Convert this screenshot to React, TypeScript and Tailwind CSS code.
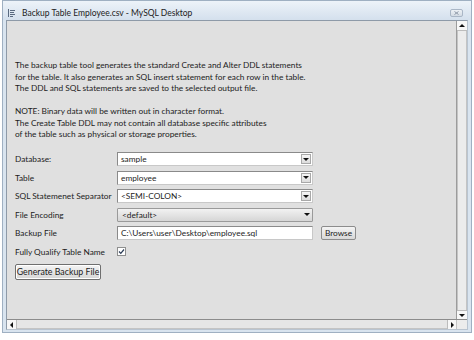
import React from 'react';

const rows = [
  { label: 'Database:', value: 'sample' },
  { label: 'Table', value: 'employee' },
  { label: 'SQL Statemenet Separator', value: '<SEMI-COLON>' },
  { label: 'File Encoding', value: '<default>', gray: true },
];

function Arrow({ dir }: { dir: 'up' | 'down' | 'left' | 'right' }) {
  const pts = {
    up: '0,4 3,1 6,4',
    down: '0,1 6,1 3,4',
    left: '4,0 4,6 1,3',
    right: '1,0 1,6 4,3',
  }[dir];
  const horiz = dir === 'left' || dir === 'right';
  return (
    <svg width={horiz ? 5 : 6} height={horiz ? 6 : 5} viewBox={horiz ? '0 0 5 6' : '0 0 6 5'}>
      <polygon points={pts} fill="#111" />
    </svg>
  );
}

function Combo({ value, gray }: { value: string; gray?: boolean }) {
  if (gray) {
    return (
      <div className="flex h-[14px] w-[196px] items-center rounded-[1px] border border-[#9a9a9a] bg-linear-to-b from-[#f2f2f2] to-[#d6d6d6]">
        <span className="flex-1 pl-[4px] leading-[12px]">{value}</span>
        <div className="flex w-[11px] items-center justify-center">
          <Arrow dir="down" />
        </div>
      </div>
    );
  }
  return (
    <div className="flex h-[14px] w-[196px] items-stretch border border-t-[#8a8a8a] border-l-[#8a8a8a] border-r-[#c8c8c8] border-b-[#c8c8c8] bg-white">
      <span className="flex-1 pl-[3px] leading-[12px]">{value}</span>
      <div className="m-[1px] flex w-[10px] items-center justify-center border border-[#a8a8a8] bg-linear-to-b from-[#f6f6f6] to-[#dcdcdc]">
        <Arrow dir="down" />
      </div>
    </div>
  );
}

function Label({ children }: { children: React.ReactNode }) {
  return <div className="w-[102px] whitespace-nowrap leading-[14px]">{children}</div>;
}

export default function App() {
  return (
    <div className="h-[340px] w-[474px] overflow-hidden bg-white font-['Lato',sans-serif] text-[8.3px] text-[#1c1c1c]">
      <div className="ml-[2px] flex h-[333px] w-[470px] flex-col border border-[#9fb0c2] bg-[#d9e4ef]">
        {/* title bar */}
        <div className="flex h-[19px] items-center bg-linear-to-b from-[#edf3f9] to-[#d4e0ed] pl-[5px] pr-[8px] pt-[4px]">
          <svg width="7" height="8" viewBox="0 0 7 8" className="mr-[7px]">
            <rect x="0" y="0" width="1" height="8" fill="#5a6a80" />
            <rect x="2" y="1" width="5" height="1" fill="#5a6a80" />
            <rect x="2" y="3" width="4" height="1" fill="#5a6a80" />
            <rect x="2" y="5" width="5" height="1" fill="#5a6a80" />
            <rect x="2" y="7" width="3" height="1" fill="#5a6a80" />
          </svg>
          <span className="flex-1 whitespace-nowrap text-[8.5px] leading-[12px] text-[#222]">Backup Table Employee.csv - MySQL Desktop</span>
          <div className="flex h-[8px] w-[13px] items-center justify-center rounded-[2px] border border-[#a9b6c6] bg-linear-to-b from-[#eef2f6] to-[#d3dbe4]">
            <svg width="5" height="4" viewBox="0 0 5 4">
              <path d="M0.5 0.5 L4.5 3.5 M4.5 0.5 L0.5 3.5" stroke="#8d99a8" strokeWidth="1" />
            </svg>
          </div>
        </div>

        {/* client area */}
        <div className="mx-[3px] mb-[2px] flex flex-1 flex-col border border-[#8e9aa8] border-b-[#b9c4d0] border-r-[#b9c4d0]">
          <div className="flex flex-1">
            <div className="flex w-[449px] flex-col bg-[#e0e0e0] pl-[8px]">
              <p className="mt-[39px] leading-[11.5px]">
                The backup table tool generates the standard Create and Alter DDL statements
                <br />
                for the table. It also generates an SQL insert statement for each row in the table.
                <br />
                The DDL and SQL statements are saved to the selected output file.
                <br />
                <br />
                NOTE: Binary data will be written out in character format.
                <br />
                The Create Table DDL may not contain all database specific attributes
                <br />
                of the table such as physical or storage properties.
              </p>

              <div className="mt-[11.5px] flex flex-col gap-[4.5px]">
                {rows.map((r) => (
                  <div key={r.label} className="flex h-[14px] items-center">
                    <Label>{r.label}</Label>
                    <Combo value={r.value} gray={r.gray} />
                  </div>
                ))}
                <div className="flex h-[14px] items-center">
                  <Label>Backup File</Label>
                  <div className="h-[14px] w-[196px] border border-t-[#8a8a8a] border-l-[#8a8a8a] border-r-[#c8c8c8] border-b-[#c8c8c8] bg-white pl-[3px] leading-[12px]">
                    C:\Users\user\Desktop\employee.sql
                  </div>
                  <div className="ml-[8px] flex h-[14px] w-[35px] items-center justify-center rounded-[2px] border border-[#8c8c8c] bg-linear-to-b from-[#f4f4f4] to-[#d8d8d8] leading-[12px]">
                    Browse
                  </div>
                </div>
                <div className="flex h-[14px] items-center">
                  <Label>Fully Qualify Table Name</Label>
                  <div className="flex h-[9px] w-[9px] items-center justify-center border border-[#8e8f8f] bg-white">
                    <svg width="7" height="7" viewBox="0 0 7 7">
                      <path d="M1 3.5 L2.8 5.3 L6 1.5" fill="none" stroke="#2a3b55" strokeWidth="1.2" />
                    </svg>
                  </div>
                </div>
              </div>

              <div className="mt-[5.5px] flex h-[16px] w-[86px] items-center justify-center whitespace-nowrap rounded-[2px] border border-[#6f6f6f] bg-linear-to-b from-[#f4f4f4] to-[#d6d6d6] text-[8.8px] leading-[12px] shadow-[inset_0_0_0_1px_#ffffff]">
                Generate Backup File
              </div>
            </div>

            {/* vertical scrollbar */}
            <div className="flex w-[11px] flex-col border-l border-[#9c9c9c] bg-[#e9e9e9]">
              <div className="flex h-[10px] items-center justify-center border-b border-[#bcbcbc] bg-[#f7f7f7]">
                <Arrow dir="up" />
              </div>
              <div className="flex-1 border-x border-[#c4c4c4] bg-[#ececec]" />
              <div className="flex h-[9px] items-center justify-center border-t border-[#bcbcbc] bg-[#f7f7f7]">
                <Arrow dir="down" />
              </div>
            </div>
          </div>

          {/* horizontal scrollbar */}
          <div className="flex h-[10px] border-t border-[#8c8c8c]">
            <div className="flex w-[10px] items-center justify-center border-r border-[#bcbcbc] bg-[#f7f7f7]">
              <Arrow dir="left" />
            </div>
            <div className="flex-1 border-b border-[#c4c4c4] bg-[#e6e6e6]" />
            <div className="flex w-[9px] items-center justify-center border-l border-[#bcbcbc] bg-[#f7f7f7]">
              <Arrow dir="right" />
            </div>
            <div className="w-[11px] border-l border-[#c4c4c4] bg-[#ececec]" />
          </div>
        </div>
      </div>
    </div>
  );
}
